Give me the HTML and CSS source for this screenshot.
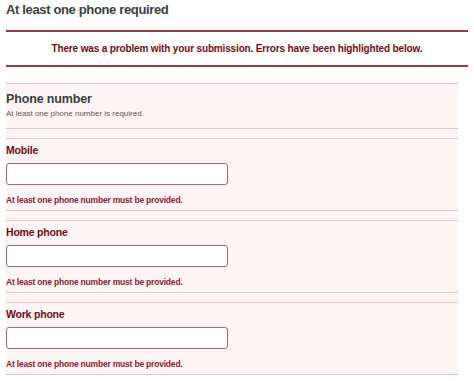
FILE: index.html
```html
<!DOCTYPE html>
<html>
<head>
<meta charset="utf-8">
<link rel="stylesheet" href="styles.css">
</head>
<body>
<h1 class="page-title">At least one phone required</h1>
<div class="error-summary">There was a problem with your submission. Errors have been highlighted below.</div>
<div class="fieldset">
  <div class="legend">
    <h2 class="legend-title">Phone number</h2>
    <p class="legend-desc">At least one phone number is required.</p>
  </div>
  <div class="field">
    <label class="field-label">Mobile</label>
    <input class="field-input" type="text">
    <p class="field-error">At least one phone number must be provided.</p>
  </div>
  <div class="field">
    <label class="field-label">Home phone</label>
    <input class="field-input" type="text">
    <p class="field-error">At least one phone number must be provided.</p>
  </div>
  <div class="field">
    <label class="field-label">Work phone</label>
    <input class="field-input" type="text">
    <p class="field-error">At least one phone number must be provided.</p>
  </div>
</div>
</body>
</html>
```
FILE: styles.css
```css
html, body {
  margin: 0;
  background: #ffffff;
}
body {
  padding: 2px 6px 0 6px;
  font-family: "Liberation Sans", Arial, sans-serif;
}
.page-title {
  margin: 0;
  font-size: 13px;
  line-height: 16px;
  letter-spacing: -0.35px;
  font-weight: bold;
  color: #3a3e42;
}
.error-summary {
  margin-top: 12px;
  border-top: 2px solid #8f3e42;
  border-bottom: 2px solid #8f3e42;
  padding: 10px 0;
  text-align: center;
  font-size: 10px;
  line-height: 13px;
  letter-spacing: -0.15px;
  font-weight: bold;
  color: #700d18;
}
.fieldset {
  margin-top: 16px;
  margin-right: 10px;
  background: #fdf4f5;
  display: flex;
  flex-direction: column;
  gap: 9px;
}
.legend {
  border-top: 1px solid #dcc8cb;
  border-bottom: 1px solid #d6c8ca;
  padding: 8px 0 9px 0;
}
.legend-title {
  margin: 0;
  font-size: 12.5px;
  line-height: 15px;
  letter-spacing: -0.15px;
  font-weight: bold;
  color: #3a3e42;
}
.legend-desc {
  margin: 2px 0 0 0;
  font-size: 8px;
  line-height: 10px;
  color: #5a5a5a;
}
.field {
  display: flex;
  flex-direction: column;
  align-items: flex-start;
  border-top: 1px solid #e0c6ca;
  border-bottom: 1px solid #d2c8ca;
  padding: 5px 0 4px 0;
}
.field-label {
  font-size: 10.5px;
  line-height: 13px;
  letter-spacing: -0.2px;
  font-weight: bold;
  color: #6f0d16;
}
.field-input {
  margin: 6px 0 0 0;
  box-sizing: border-box;
  width: 222px;
  height: 22px;
  border: 1px solid #a4686d;
  border-radius: 3px;
  background: #ffffff;
  padding: 0;
}
.field-error {
  margin: 10px 0 0 0;
  font-size: 8.5px;
  line-height: 11px;
  letter-spacing: -0.2px;
  font-weight: bold;
  color: #8a2233;
}
```
